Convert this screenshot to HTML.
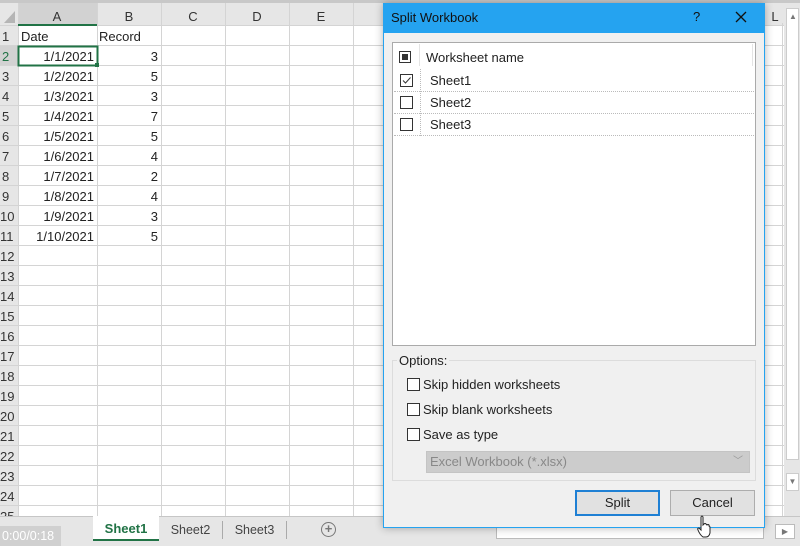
<!DOCTYPE html><html><head><style>
*{box-sizing:border-box;margin:0;padding:0}
body{width:800px;height:546px;overflow:hidden;background:#fff;font-family:"Liberation Sans",sans-serif;position:relative;font-size:12.5px;color:#222}
.a{position:absolute}
</style></head><body>
<div class="a" style="left:0;top:0;width:800px;height:3px;background:#c8c8c8"></div>
<svg class="a" style="left:0;top:3px" width="786" height="513">
<rect x="0" y="0" width="786" height="23" fill="#e6e6e6"/>
<rect x="18" y="0" width="79" height="23" fill="#d2d2d2"/>
<rect x="0" y="0" width="18" height="513" fill="#e6e6e6"/>
<rect x="0" y="43" width="18" height="20" fill="#d2d2d2"/>
<polygon points="15,8 15,20 4,20" fill="#b5b5b5"/>
<g stroke="#d4d4d4" stroke-width="1">
<line x1="18.5" y1="0" x2="18.5" y2="513"/>
<line x1="97.5" y1="0" x2="97.5" y2="513"/>
<line x1="161.5" y1="0" x2="161.5" y2="513"/>
<line x1="225.5" y1="0" x2="225.5" y2="513"/>
<line x1="289.5" y1="0" x2="289.5" y2="513"/>
<line x1="353.5" y1="0" x2="353.5" y2="513"/>
<line x1="782.5" y1="20" x2="782.5" y2="513"/>
</g>
<g stroke="#d4d4d4">
<line x1="0" y1="22.5" x2="786" y2="22.5"/>
<line x1="0" y1="42.5" x2="786" y2="42.5"/><line x1="0" y1="62.5" x2="786" y2="62.5"/><line x1="0" y1="82.5" x2="786" y2="82.5"/><line x1="0" y1="102.5" x2="786" y2="102.5"/><line x1="0" y1="122.5" x2="786" y2="122.5"/><line x1="0" y1="142.5" x2="786" y2="142.5"/><line x1="0" y1="162.5" x2="786" y2="162.5"/><line x1="0" y1="182.5" x2="786" y2="182.5"/><line x1="0" y1="202.5" x2="786" y2="202.5"/><line x1="0" y1="222.5" x2="786" y2="222.5"/><line x1="0" y1="242.5" x2="786" y2="242.5"/><line x1="0" y1="262.5" x2="786" y2="262.5"/><line x1="0" y1="282.5" x2="786" y2="282.5"/><line x1="0" y1="302.5" x2="786" y2="302.5"/><line x1="0" y1="322.5" x2="786" y2="322.5"/><line x1="0" y1="342.5" x2="786" y2="342.5"/><line x1="0" y1="362.5" x2="786" y2="362.5"/><line x1="0" y1="382.5" x2="786" y2="382.5"/><line x1="0" y1="402.5" x2="786" y2="402.5"/><line x1="0" y1="422.5" x2="786" y2="422.5"/><line x1="0" y1="442.5" x2="786" y2="442.5"/><line x1="0" y1="462.5" x2="786" y2="462.5"/><line x1="0" y1="482.5" x2="786" y2="482.5"/><line x1="0" y1="502.5" x2="786" y2="502.5"/>
</g>
<line x1="18" y1="22" x2="97" y2="22" stroke="#217346" stroke-width="2"/>
<rect x="18.5" y="43.5" width="79" height="19" fill="none" stroke="#217346" stroke-width="2"/>
<rect x="95" y="60" width="4" height="4" fill="#217346"/>
<g font-family="Liberation Sans" font-size="13" fill="#333" text-anchor="middle">
<text x="57" y="18">A</text><text x="129" y="18">B</text><text x="193" y="18">C</text><text x="257" y="18">D</text><text x="321" y="18">E</text><text x="775" y="18">L</text>
</g>
<g font-family="Liberation Sans" font-size="13" fill="#333">
<text x="2" y="38">1</text><text x="2" y="58" fill="#217346">2</text><text x="2" y="78">3</text><text x="2" y="98">4</text><text x="2" y="118">5</text><text x="2" y="138">6</text><text x="2" y="158">7</text><text x="2" y="178">8</text><text x="2" y="198">9</text><text x="0" y="218">10</text><text x="0" y="238">11</text><text x="0" y="258">12</text><text x="0" y="278">13</text><text x="0" y="298">14</text><text x="0" y="318">15</text><text x="0" y="338">16</text><text x="0" y="358">17</text><text x="0" y="378">18</text><text x="0" y="398">19</text><text x="0" y="418">20</text><text x="0" y="438">21</text><text x="0" y="458">22</text><text x="0" y="478">23</text><text x="0" y="498">24</text><text x="0" y="518">25</text>
</g>
<g font-family="Liberation Sans" font-size="13" fill="#222">
<text x="21" y="38">Date</text><text x="99" y="38">Record</text>
</g>
<g font-family="Liberation Sans" font-size="13" fill="#222" text-anchor="end">
<text x="94" y="58">1/1/2021</text><text x="94" y="78">1/2/2021</text><text x="94" y="98">1/3/2021</text><text x="94" y="118">1/4/2021</text><text x="94" y="138">1/5/2021</text><text x="94" y="158">1/6/2021</text><text x="94" y="178">1/7/2021</text><text x="94" y="198">1/8/2021</text><text x="94" y="218">1/9/2021</text><text x="94" y="238">1/10/2021</text>
<text x="158" y="58">3</text><text x="158" y="78">5</text><text x="158" y="98">3</text><text x="158" y="118">7</text><text x="158" y="138">5</text><text x="158" y="158">4</text><text x="158" y="178">2</text><text x="158" y="198">4</text><text x="158" y="218">3</text><text x="158" y="238">5</text>
</g>
</svg>
<div class="a" style="left:784px;top:3px;width:16px;height:513px;background:#e6e6e6"></div>
<div class="a" style="left:786px;top:8px;width:13px;height:452px;background:#fff;border:1px solid #ccc"></div>
<div class="a" style="left:789px;top:12px;font-size:8px;color:#777">▲</div>
<div class="a" style="left:786px;top:473px;width:13px;height:18px;background:#fff;border:1px solid #ccc;font-size:8px;color:#777;text-align:center;line-height:16px">▼</div>
<div class="a" style="left:0;top:516px;width:800px;height:30px;background:#e6e6e6;border-top:1px solid #c6c6c6"></div>
<div class="a" style="left:0;top:526px;width:61px;height:20px;background:#d0d0d0;color:#fff;font-size:12.5px;line-height:20px;padding-left:2px">0:00/0:18</div>
<div class="a" style="left:93px;top:516px;width:66px;height:25px;background:#fff;border-bottom:2px solid #217346;color:#217346;font-weight:bold;text-align:center;line-height:26px;font-size:13px">Sheet1</div>
<div class="a" style="left:159px;top:521px;width:64px;height:18px;border-right:1px solid #aaa;color:#444;text-align:center;line-height:18px;font-size:12.5px">Sheet2</div>
<div class="a" style="left:223px;top:521px;width:64px;height:18px;border-right:1px solid #aaa;color:#444;text-align:center;line-height:18px;font-size:12.5px">Sheet3</div>
<div class="a" style="left:321px;top:522px;width:15px;height:15px;border:1.5px solid #777;border-radius:50%;color:#777;text-align:center;line-height:12px;font-size:13px;font-weight:bold">+</div>
<div class="a" style="left:496px;top:525px;width:268px;height:14px;background:#fff;border:1px solid #bbb"></div>
<div class="a" style="left:775px;top:524px;width:20px;height:15px;background:#fff;border:1px solid #bbb;font-size:8px;color:#777;text-align:center;line-height:13px">▶</div>
<div class="a" style="left:383px;top:3px;width:382px;height:525px;background:#f0f0f0;border:1px solid #25a3f0;box-shadow:0 0 8px rgba(0,0,0,.3)"></div>
<div class="a" style="left:383px;top:3px;width:382px;height:30px;background:#25a3f0"></div>
<div class="a" style="left:391px;top:10px;font-size:13px;color:#111">Split Workbook</div>
<div class="a" style="left:693px;top:9px;font-size:13px;color:#111">?</div>
<svg class="a" style="left:735px;top:11px" width="12" height="12"><path d="M1 1L11 11M11 1L1 11" stroke="#111" stroke-width="1.3"/></svg>
<div class="a" style="left:392px;top:42px;width:364px;height:304px;background:#fff;border:1px solid #aaa"></div>
<div class="a" style="left:419px;top:44px;width:1px;height:22px;background:#e4e4e4"></div>
<div class="a" style="left:752px;top:44px;width:1px;height:22px;background:#e4e4e4"></div>
<div class="a" style="left:399px;top:51px;width:12px;height:12px;border:1px solid #333;padding:2px"><div style="width:6px;height:6px;background:#333"></div></div>
<div class="a" style="left:426px;top:50px;font-size:13px">Worksheet name</div>
<div class="a" style="left:420px;top:69px;width:1px;height:67px;border-left:1px dotted #bbb"></div>
<div class="a" style="left:394px;top:91px;width:360px;border-top:1px dotted #bbb"></div>
<div class="a" style="left:394px;top:113px;width:360px;border-top:1px dotted #bbb"></div>
<div class="a" style="left:394px;top:135px;width:360px;border-top:1px dotted #bbb"></div>
<div class="a" style="left:400px;top:74px;width:13px;height:13px;border:1px solid #333;background:#fff"></div>
<svg class="a" style="left:401px;top:75px" width="11" height="11"><path d="M2 5.5L4.5 8L9.5 2.5" stroke="#333" stroke-width="1" fill="none"/></svg>
<div class="a" style="left:400px;top:96px;width:13px;height:13px;border:1px solid #333;background:#fff"></div>
<div class="a" style="left:400px;top:118px;width:13px;height:13px;border:1px solid #333;background:#fff"></div>
<div class="a" style="left:430px;top:73px;font-size:13px">Sheet1</div>
<div class="a" style="left:430px;top:95px;font-size:13px">Sheet2</div>
<div class="a" style="left:430px;top:117px;font-size:13px">Sheet3</div>
<div class="a" style="left:392px;top:360px;width:364px;height:121px;border:1px solid #dcdcdc"></div>
<div class="a" style="left:397px;top:353px;background:#f0f0f0;padding:0 2px;font-size:13px">Options:</div>
<div class="a" style="left:407px;top:378px;width:13px;height:13px;border:1px solid #333;background:#fff"></div>
<div class="a" style="left:423px;top:377px;font-size:13px">Skip hidden worksheets</div>
<div class="a" style="left:407px;top:403px;width:13px;height:13px;border:1px solid #333;background:#fff"></div>
<div class="a" style="left:423px;top:402px;font-size:13px">Skip blank worksheets</div>
<div class="a" style="left:407px;top:428px;width:13px;height:13px;border:1px solid #333;background:#fff"></div>
<div class="a" style="left:423px;top:427px;font-size:13px">Save as type</div>
<div class="a" style="left:426px;top:451px;width:324px;height:22px;background:#ccc;border:1px solid #c4c4c4;color:#888;font-size:13px;line-height:20px;padding-left:3px">Excel Workbook (*.xlsx)<span style="position:absolute;right:6px;top:0;color:#999;font-size:10px">﹀</span></div>
<div class="a" style="left:575px;top:490px;width:85px;height:26px;background:#e1e1e1;border:2px solid #1f80d4;text-align:center;line-height:22px;font-size:13px">Split</div>
<div class="a" style="left:670px;top:490px;width:85px;height:26px;background:#e1e1e1;border:1px solid #adadad;text-align:center;line-height:24px;font-size:13px">Cancel</div>
<svg class="a" style="left:696px;top:515px" width="16" height="24"><path d="M5 2Q6 0 7 2V10L8 9Q9 8 10 9L11 10Q12 9 13 10V11Q14 11 14 13V18Q13 22 10 22H7Q4 20 2 15Q1 13 3 13L5 15Z" fill="#fff" stroke="#222" stroke-width="1"/></svg>
</body></html>
